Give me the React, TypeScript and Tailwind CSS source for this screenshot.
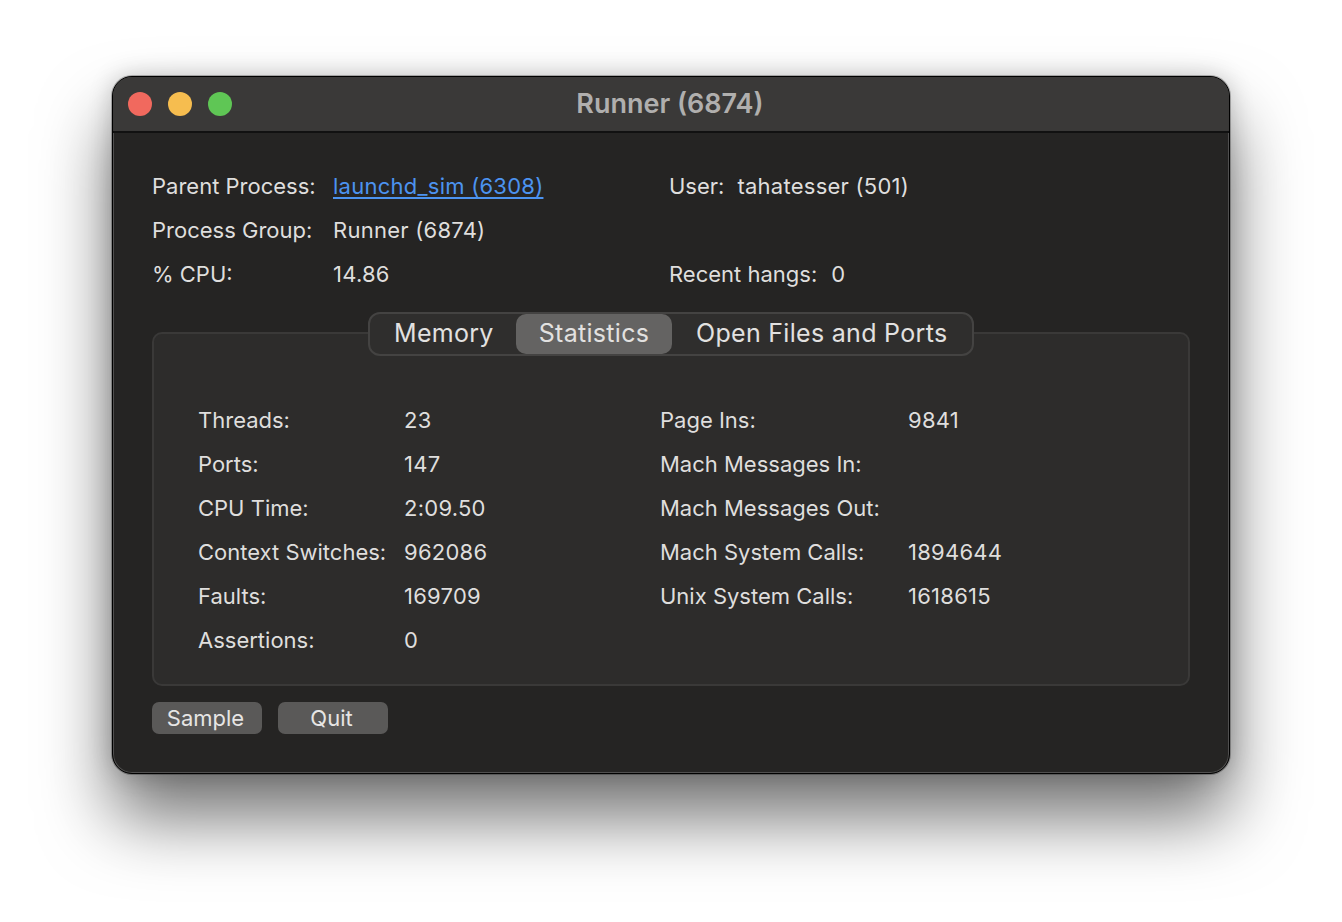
import type { ReactNode } from "react";

const font = { fontFamily: "Inter, 'Noto Sans', sans-serif" };

const leftStats: [string, string][] = [
  ["Threads:", "23"],
  ["Ports:", "147"],
  ["CPU Time:", "2:09.50"],
  ["Context Switches:", "962086"],
  ["Faults:", "169709"],
  ["Assertions:", "0"],
];

const rightStats: [string, string][] = [
  ["Page Ins:", "9841"],
  ["Mach Messages In:", ""],
  ["Mach Messages Out:", ""],
  ["Mach System Calls:", "1894644"],
  ["Unix System Calls:", "1618615"],
];

function Row({ label, value, labelWidth }: { label: string; value: ReactNode; labelWidth: string }) {
  return (
    <div className="flex h-[44px] items-center whitespace-nowrap">
      <span className={labelWidth}>{label}</span>
      <span className="tracking-[0.25px]">{value}</span>
    </div>
  );
}

export default function App() {
  return (
    <div className="h-[922px] w-[1342px] overflow-hidden bg-white pl-[112px] pt-[76px]" style={font}>
      <div className="h-[698px] w-[1118px] overflow-hidden rounded-[20px] border border-black bg-[#252423] text-[22px] text-[#dfdedd] shadow-[0_0_0_1px_rgba(0,0,0,0.25),0_44px_70px_rgba(0,0,0,0.55),0_0_24px_rgba(0,0,0,0.2),inset_0_0_0_1px_rgba(255,255,255,0.2)]">
        {/* title bar */}
        <div className="relative flex h-[56px] items-center border-b-2 border-[#111111] bg-[#3a3938]">
          <div className="flex gap-[16px] pl-[15px]">
            <div className="h-[24px] w-[24px] rounded-full bg-[#f1695e]" />
            <div className="h-[24px] w-[24px] rounded-full bg-[#f6bd4f]" />
            <div className="h-[24px] w-[24px] rounded-full bg-[#5fc655]" />
          </div>
          <div className="absolute inset-0 flex items-center justify-center pr-[2px] text-[27px] font-semibold text-[#b0afae]">
            Runner (6874)
          </div>
        </div>

        <div className="px-[39px] pt-[31px]">
          {/* process info */}
          <div className="flex">
            <div className="w-[517px]">
              <Row
                label="Parent Process:"
                value={<a className="text-[#4c93f0] underline underline-offset-[3px]">launchd_sim (6308)</a>}
                labelWidth="w-[181px]"
              />
              <Row label="Process Group:" value="Runner (6874)" labelWidth="w-[181px]" />
              <Row label="% CPU:" value="14.86" labelWidth="w-[181px]" />
            </div>
            <div>
              <div className="flex h-[44px] items-center gap-[13px] whitespace-nowrap">
                <span>User:</span>
                <span className="tracking-[0.25px]">tahatesser (501)</span>
              </div>
              <div className="h-[44px]" />
              <div className="flex h-[44px] items-center gap-[14px] whitespace-nowrap">
                <span>Recent hangs:</span>
                <span>0</span>
              </div>
            </div>
          </div>

          {/* statistics panel */}
          <div className="relative mt-[36px] h-[354px] w-[1038px] rounded-[10px] border-2 border-[#3a3938] bg-[#2d2c2b]">
            <div className="absolute left-[214px] top-[-22px] flex h-[44px] w-[606px] items-center rounded-[12px] border-2 border-[#444342] bg-[#2f2e2d] pl-[24px] text-[25px] tracking-[0.3px] text-[#e2e1e0]">
              <span className="w-[122px]">Memory</span>
              <span className="flex h-[40px] w-[156px] items-center justify-center rounded-[10px] bg-[#646362]">
                Statistics
              </span>
              <span className="pl-[24px]">Open Files and Ports</span>
            </div>
            <div className="flex pl-[44px] pt-[64px]">
              <div className="w-[462px]">
                {leftStats.map(([label, value]) => (
                  <Row key={label} label={label} value={value} labelWidth="w-[206px]" />
                ))}
              </div>
              <div>
                {rightStats.map(([label, value]) => (
                  <Row key={label} label={label} value={value} labelWidth="w-[248px]" />
                ))}
              </div>
            </div>
          </div>

          {/* buttons */}
          <div className="mt-[16px] flex gap-[16px]">
            <button className="h-[32px] w-[110px] rounded-[7px] bg-[#5a5958] pr-[3px] text-[#e6e5e4]">Sample</button>
            <button className="h-[32px] w-[110px] rounded-[7px] bg-[#5a5958] pr-[3px] text-[#e6e5e4]">Quit</button>
          </div>
        </div>
      </div>
    </div>
  );
}
